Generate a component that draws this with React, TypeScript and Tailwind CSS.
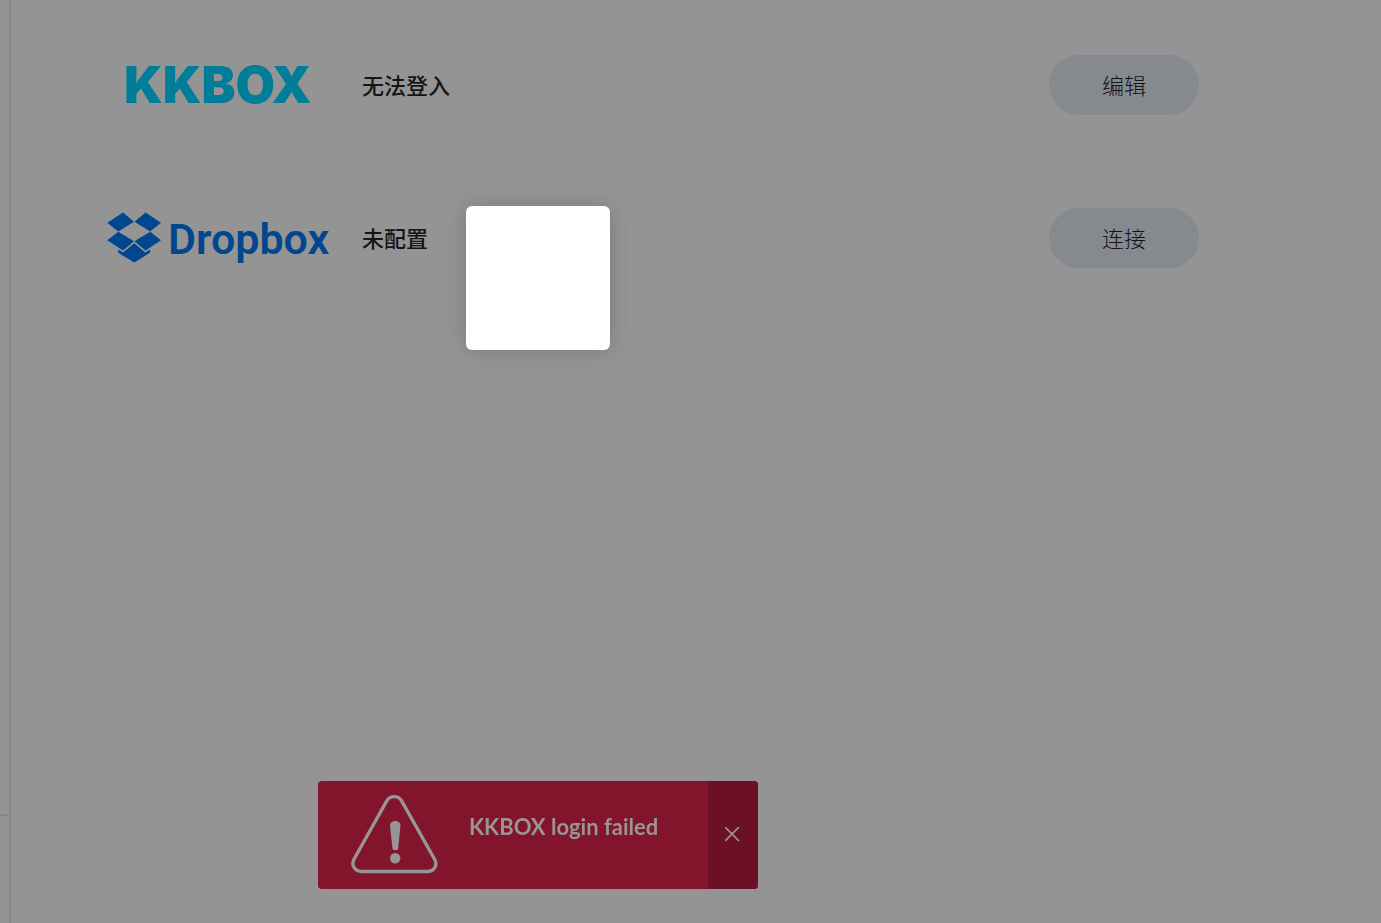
import type { ReactNode } from "react";

function KkboxLogo() {
  return (
    <svg viewBox="0 0 188 40" className="h-10 w-[188px] overflow-visible" role="img" aria-label="KKBOX">
      <text x="-1" y="38" fill="#007d99" fontSize="51" fontWeight="900" className="font-['Inter',sans-serif]">
        KKBOX
      </text>
    </svg>
  );
}

function DropboxLogo() {
  return (
    <svg viewBox="0 0 224 52" className="h-[52px] w-[224px] overflow-visible" role="img" aria-label="Dropbox">
      <g fill="#00478f">
        <path d="M16 0.5 L27 9.7 L11.2 19.5 L0.3 10.8 Z" />
        <path d="M38.5 0.5 L54 10.8 L43.2 19.5 L27.5 9.7 Z" />
        <path d="M11.2 19.7 L27 29.3 L16 38.5 L0.3 28.3 Z" />
        <path d="M43.2 19.7 L54 28.3 L38.5 38.5 L27.5 29.3 Z" />
        <path d="M27.3 31.3 L38.3 40.4 L43 37.4 V40.8 L27.3 50.6 L11.3 40.8 V37.4 L16.1 40.4 Z" />
        <text x="61" y="42" fontSize="43" fontWeight="600" className="font-['Roboto',sans-serif]">
          Dropbox
        </text>
      </g>
    </svg>
  );
}

function ServiceRow({ logo, status, action }: { logo: ReactNode; status: string; action: string }) {
  return (
    <li className="flex h-[153px] items-center">
      <div className="flex w-[223px] shrink-0 justify-center">{logo}</div>
      <p className="ml-8 flex-1 pt-0.5 text-[22px] leading-8 font-medium text-[#151515]">{status}</p>
      <button
        type="button"
        className="h-[60px] w-[150px] shrink-0 rounded-full bg-[#868a8f] pt-0.5 text-[22px] leading-8 font-light text-[#111318]"
      >
        {action}
      </button>
    </li>
  );
}

function Toast() {
  return (
    <div
      role="alert"
      className="fixed bottom-[34px] left-[318px] flex h-[108px] w-[440px] overflow-hidden rounded bg-[#82152b] text-[#999495]"
    >
      <svg viewBox="0 0 88 80" className="mt-[13px] ml-8 h-20 w-[88px]" fill="none" aria-hidden="true">
        <path
          d="M37.2 6.2 C40.2 1.4 48.2 1.4 51.2 6.2 L84.2 64.5 C88.4 71.5 84 77.5 77 77.5 H12 C5 77.5 0.4 71.5 4.4 64.5 Z"
          stroke="currentColor"
          strokeWidth="3.4"
        />
        <path
          d="M40 31.5 C40 25.5 50.5 25.5 50.5 31.5 L48.2 54 Q47.8 56 46.8 56 H43.8 Q42.8 56 42.4 54 Z"
          fill="currentColor"
        />
        <circle cx="45.2" cy="64.2" r="5.2" fill="currentColor" />
      </svg>
      <p className="mt-[30px] ml-[31px] flex-1 font-['Lato',sans-serif] text-[22px] leading-8 font-bold">
        KKBOX login failed
      </p>
      <button type="button" aria-label="关闭" className="flex w-[50px] items-center justify-center bg-[#6c1025]">
        <svg viewBox="0 0 16 16" className="h-4 w-4" fill="none" aria-hidden="true">
          <path d="M0 0 L14 14 M14 0 L0 14" stroke="currentColor" strokeWidth="1.7" />
        </svg>
      </button>
    </div>
  );
}

export default function App() {
  return (
    <div className="flex min-h-screen bg-[#949494] font-['Lato','Noto_Sans_CJK_SC',sans-serif]">
      <aside className="flex w-[11px] shrink-0 flex-col border-r-2 border-[#868686]">
        <div className="flex-1 border-b-2 border-[#868686]" />
        <div className="h-[107px]" />
      </aside>
      <main className="flex-1 pr-[182px] pl-24">
        <ul className="pt-2">
          <ServiceRow logo={<KkboxLogo />} status="无法登入" action="编辑" />
          <ServiceRow logo={<DropboxLogo />} status="未配置" action="连接" />
        </ul>
      </main>
      <div
        role="dialog"
        aria-busy="true"
        className="fixed top-[206px] left-[466px] h-36 w-36 rounded-md bg-white shadow-[0_0_20px_rgba(0,0,0,0.18)]"
      />
      <Toast />
    </div>
  );
}
